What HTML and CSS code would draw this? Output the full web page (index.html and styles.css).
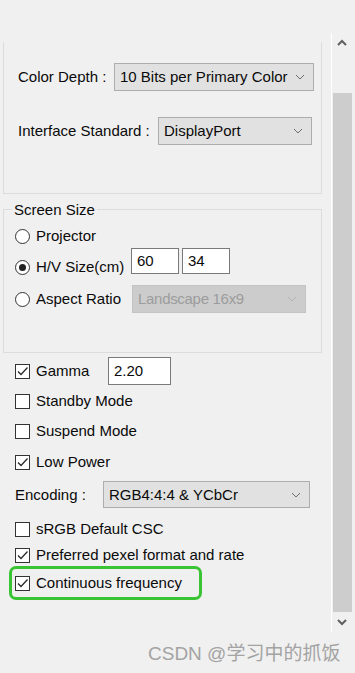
FILE: index.html
```html
<!DOCTYPE html>
<html lang="en">
<head>
<meta charset="utf-8">
<title>Display settings</title>
<link rel="stylesheet" href="styles.css">
</head>
<body>
<div class="frame">
  <div class="content">
    <div class="group1">
      <div class="frow">
        <span class="flabel fl-depth">Color Depth :</span>
        <div class="select sel-depth"><span>10 Bits per Primary Color</span>
          <svg class="chev" width="10" height="6" viewBox="0 0 10 6"><path d="M1 1 L5 5 L9 1" fill="none" stroke="#6d6d6d" stroke-width="1"/></svg>
        </div>
      </div>
      <div class="frow frow2">
        <span class="flabel fl-iface">Interface Standard :</span>
        <div class="select sel-iface"><span>DisplayPort</span>
          <svg class="chev" width="10" height="6" viewBox="0 0 10 6"><path d="M1 1 L5 5 L9 1" fill="none" stroke="#6d6d6d" stroke-width="1"/></svg>
        </div>
      </div>
    </div>

    <fieldset class="group2">
      <legend>Screen Size</legend>
      <div class="rrow rr1"><span class="radio"></span><span class="rtext">Projector</span></div>
      <div class="rrow rr2">
        <div class="rl rl-top"><span class="radio on"></span><span class="rtext fixed">H/V Size(cm)</span></div>
        <input class="tb" type="text" value="60">
        <input class="tb tb2" type="text" value="34">
      </div>
      <div class="rrow rr3">
        <div class="rl"><span class="radio"></span><span class="rtext fixed">Aspect Ratio</span></div>
        <div class="select dis"><span>Landscape 16x9</span>
          <svg class="chev" width="10" height="6" viewBox="0 0 10 6"><path d="M1 1 L5 5 L9 1" fill="none" stroke="#b4b4b4" stroke-width="1"/></svg>
        </div>
      </div>
    </fieldset>

    <div class="crow gamma"><span class="cb on"><svg width="13" height="13" viewBox="0 0 13 13"><path d="M2 6.5 L5 9.5 L11.5 2.5" fill="none" stroke="#2a2a2a" stroke-width="1.3"/></svg></span><span class="ctext wide">Gamma</span><input class="tb gtb" type="text" value="2.20"></div>
    <div class="crow standby"><span class="cb"></span><span class="ctext">Standby Mode</span></div>
    <div class="crow suspend"><span class="cb"></span><span class="ctext">Suspend Mode</span></div>
    <div class="crow lowpower"><span class="cb on"><svg width="13" height="13" viewBox="0 0 13 13"><path d="M2 6.5 L5 9.5 L11.5 2.5" fill="none" stroke="#2a2a2a" stroke-width="1.3"/></svg></span><span class="ctext">Low Power</span></div>
    <div class="crow encoding"><span class="elabel">Encoding :</span>
      <div class="select sel-enc"><span>RGB4:4:4 &amp; YCbCr</span>
        <svg class="chev" width="10" height="6" viewBox="0 0 10 6"><path d="M1 1 L5 5 L9 1" fill="none" stroke="#6d6d6d" stroke-width="1"/></svg>
      </div>
    </div>
    <div class="crow srgb"><span class="cb"></span><span class="ctext">sRGB Default CSC</span></div>
    <div class="crow preferred"><span class="cb on"><svg width="13" height="13" viewBox="0 0 13 13"><path d="M2 6.5 L5 9.5 L11.5 2.5" fill="none" stroke="#2a2a2a" stroke-width="1.3"/></svg></span><span class="ctext">Preferred pexel format and rate</span></div>
    <div class="crow continuous"><span class="cb on"><svg width="13" height="13" viewBox="0 0 13 13"><path d="M2 6.5 L5 9.5 L11.5 2.5" fill="none" stroke="#2a2a2a" stroke-width="1.3"/></svg></span><span class="ctext">Continuous frequency</span></div>
  </div>

  <div class="scroll">
    <div class="sb-up"><svg width="20" height="20" viewBox="0 0 20 20"><path d="M6 12 L10 8 L14 12" fill="none" stroke="#606060" stroke-width="2"/></svg></div>
    <div class="thumb"></div>
    <div class="sb-down"><svg width="20" height="20" viewBox="0 0 20 20"><path d="M6 8 L10 12 L14 8" fill="none" stroke="#606060" stroke-width="2"/></svg></div>
  </div>
</div>
<div class="wm">CSDN @学习中的抓饭</div>
</body>
</html>
```

FILE: styles.css
```css
* { box-sizing: border-box; }
html, body { margin: 0; padding: 0; }
body {
  background: #f0f0f0;
  font-family: "Liberation Sans", Arial, sans-serif;
  font-size: 15px;
  color: #0a0a0a;
  width: 355px;
  height: 673px;
  overflow: hidden;
  position: relative;
}
.frame { display: flex; align-items: flex-start; }
.content { width: 331px; padding-top: 42px; }

/* group 1 (top border scrolled away) */
.group1 {
  margin-left: 3px;
  width: 319px;
  border: 1px solid #dcdcdc;
  border-top: none;
  padding: 21px 0 48px 14px;
}
.frow { display: flex; align-items: center; height: 28px; }
.frow2 { margin-top: 26px; }
.flabel { line-height: 18px; white-space: nowrap; }
.fl-depth { width: 96px; }
.fl-iface { width: 140px; }

.select {
  display: flex;
  align-items: center;
  justify-content: space-between;
  height: 28px;
  background: #e1e1e1;
  border: 1px solid #adadad;
  padding: 0 8px 0 5px;
  white-space: nowrap;
  line-height: 18px;
}
.sel-depth { width: 200px; }
.sel-iface { width: 154px; }
.chev { flex: none; }

/* group 2 */
.group2 {
  margin: 7px 0 0 3px;
  width: 319px;
  min-width: 0;
  border: 1px solid #dcdcdc;
  padding: 0 0 39px 0;
}
.group2 legend {
  margin-left: 8px;
  padding: 0 2px;
  line-height: 17px;
}
.rrow { display: flex; align-items: center; padding-left: 11px; }
.rr1 { margin-top: 9px; height: 18px; gap: 6px; }
.rr2 { margin-top: 3px; align-items: flex-start; }
.rl { display: flex; align-items: center; gap: 6px; height: 18px; }
.rl-top { margin-top: 10px; }
.rr3 { margin-top: 9px; height: 28px; }
.rtext { line-height: 18px; white-space: nowrap; }
.rtext.fixed { width: 95px; }
.radio {
  flex: none;
  width: 15px;
  height: 15px;
  border: 1px solid #333;
  border-radius: 50%;
  background: #fff;
  display: flex;
  align-items: center;
  justify-content: center;
}
.radio.on::after {
  content: "";
  width: 7px;
  height: 7px;
  border-radius: 50%;
  background: #222;
}
.tb {
  width: 48px;
  height: 26px;
  border: 1px solid #7a7a7a;
  background: #fff;
  font-family: "Liberation Sans", Arial, sans-serif;
  font-size: 15px;
  color: #0a0a0a;
  padding: 0 0 2px 5px;
  margin: 0;
  outline: none;
}
.tb2 { margin-left: 3px; }
.select.dis {
  width: 174px;
  margin-left: 1px;
  background: #cccccc;
  border-color: #c4c4c4;
  color: #9c9c9c;
  letter-spacing: -0.3px;
}

/* checkbox rows */
.crow { display: flex; align-items: center; margin-left: 15px; height: 18px; }
.cb {
  flex: none;
  width: 15px;
  height: 15px;
  border: 1px solid #333;
  background: #fff;
  display: flex;
  align-items: center;
  justify-content: center;
  margin-right: 6px;
}
.ctext { line-height: 18px; white-space: nowrap; }
.ctext.wide { width: 72px; }
.gamma { margin-top: 4px; height: 28px; }
.gtb { width: 63px; height: 28px; }
.standby { margin-top: 7px; }
.suspend { margin-top: 12px; }
.lowpower { margin-top: 13px; }
.encoding { margin-top: 10px; height: 27px; }
.elabel { width: 88px; line-height: 18px; white-space: nowrap; }
.sel-enc { width: 207px; height: 27px; }
.srgb { margin-top: 12px; }
.preferred { margin-top: 8px; }
.continuous {
  margin-top: 2px;
  margin-left: 9px;
  width: 193px;
  height: 34px;
  border: 3px solid #39c433;
  border-radius: 7px;
  padding-left: 3px;
}

/* scrollbar */
.scroll {
  width: 21px;
  margin-top: 33px;
  height: 599px;
  border-left: 1px solid #ffffff;
  display: flex;
  flex-direction: column;
}
.sb-up { height: 60px; }
.sb-up svg, .sb-down svg { display: block; }
.thumb { height: 519px; margin-left: 1px; width: 19px; background: #cdcdcd; }
.sb-down { height: 20px; }

/* watermark */
.wm {
  position: absolute;
  left: 148px;
  top: 643px;
  font-family: "Liberation Sans", "Noto Sans CJK SC", sans-serif;
  font-size: 19px;
  line-height: 22px;
  color: #a3a3a3;
  white-space: nowrap;
}
```
